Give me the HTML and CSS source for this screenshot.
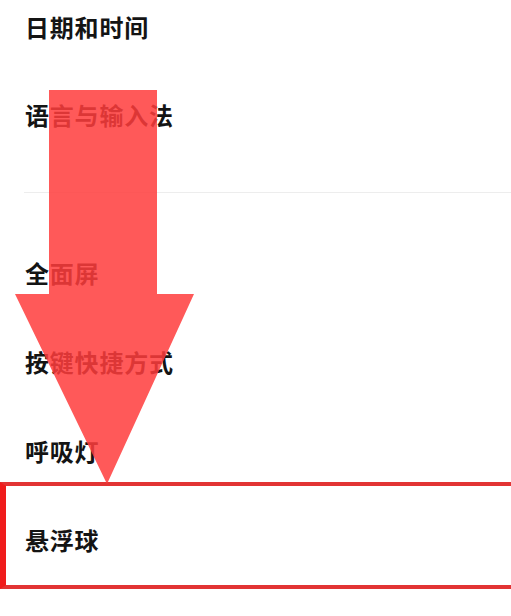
FILE: index.html
```html
<!DOCTYPE html>
<html lang="zh">
<head>
<meta charset="utf-8">
<link rel="stylesheet" href="styles.css">
</head>
<body>
<div class="page">
  <div class="group first">
    <div class="row"><span class="label">日期和时间</span></div>
    <div class="row"><span class="label">语言与输入法</span></div>
  </div>
  <div class="divider"></div>
  <div class="group second">
    <div class="row tall"><span class="label">全面屏</span></div>
    <div class="row tall"><span class="label">按键快捷方式</span></div>
    <div class="row tall"><span class="label">呼吸灯</span></div>
    <div class="row tall highlight"><span class="label">悬浮球</span><span class="frame"></span></div>
    <div class="row tall"><span class="label faded">手势与按键</span></div>
  </div>
  <svg class="arrow" width="511" height="616" viewBox="0 0 511 616">
    <polygon points="49,90 157,90 157,294 194,294 107,484 15,294 49,294"></polygon>
  </svg>
</div>
</body>
</html>
```
FILE: styles.css
```css
html, body {
  margin: 0;
  padding: 0;
  background: #ffffff;
}
.page {
  position: relative;
  width: 511px;
  height: 616px;
  overflow: hidden;
  font-family: "Noto Sans CJK SC", "Noto Sans", sans-serif;
}
.group.first {
  margin-top: -17px;
  padding-bottom: 33px;
}
.group.second {
  padding-top: 35px;
}
.row {
  position: relative;
  height: 88px;
  display: flex;
  align-items: center;
  padding-left: 25px;
}
.row.tall {
  height: 89px;
}
.label {
  font-size: 24px;
  font-weight: 700;
  color: #141414;
  letter-spacing: 0.8px;
  line-height: 1;
}
.label.faded {
  color: #e6e6e6;
}
.divider {
  height: 1px;
  margin-left: 24px;
  background: #ededed;
}
.frame {
  position: absolute;
  top: -13px;
  bottom: -5px;
  left: 0;
  right: -10px;
  border: 4px solid #e23434;
  border-left-width: 6px;
  border-left-color: #f01c1c;
}
.arrow {
  position: absolute;
  left: 0;
  top: 0;
}
.arrow polygon {
  fill: rgb(255, 60, 60);
  opacity: 0.85;
}
```
